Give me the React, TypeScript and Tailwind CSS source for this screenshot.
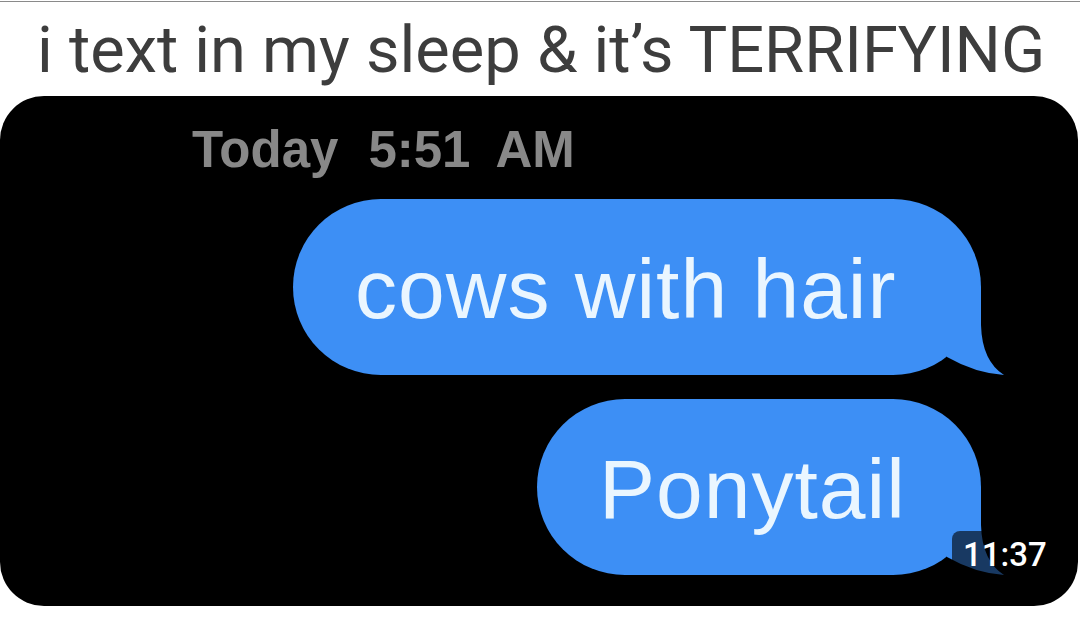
const BubbleTail = () => (
  <svg
    className="absolute right-[-24px] bottom-0 w-[110px] h-[110px]"
    viewBox="0 0 110 110"
  >
    <path
      d="M52 22 L86 22 L86 60 Q87 96 109 110 Q80 108 52 92 Z"
      fill="#3d8ff5"
    />
  </svg>
);

interface BubbleProps {
  text: string;
  width: string;
}

const Bubble = ({ text, width }: BubbleProps) => (
  <div
    className={`relative h-[176px] rounded-full bg-[#3d8ff5] pl-[62px] pt-[48px] ${width}`}
  >
    <span className="block text-[84px] leading-none tracking-[1px] text-[#eaf6ff] font-['Liberation_Sans',Arial,sans-serif]">
      {text}
    </span>
    <BubbleTail />
  </div>
);

export default function App() {
  return (
    <div className="relative w-[1080px] h-[619px] overflow-hidden bg-white flex flex-col">
      <div className="mt-px h-px w-full bg-[#8a8a8a]" />

      <h1 className="mt-[16px] pl-[37px] text-[65px] leading-none font-normal text-[#3d3d3d] font-['Roboto',Arial,sans-serif] whitespace-nowrap">
        i text in my sleep &amp; it’s TERRIFYING
      </h1>

      <div className="mt-[13px] w-[1078px] h-[510px] rounded-[44px] bg-black flex flex-col pt-[28px]">
        <div className="flex items-baseline pl-[192px] text-[51px] leading-none font-bold text-[#888888] font-['Liberation_Sans',Arial,sans-serif]">
          <span>Today</span>
          <span className="ml-[30px]">5:51</span>
          <span className="ml-[25px]">AM</span>
        </div>

        <div className="mt-[24px] flex flex-col items-end gap-[24px] pr-[97px]">
          <Bubble text="cows with hair" width="w-[688px]" />
          <Bubble text="Ponytail" width="w-[444px]" />
        </div>
      </div>

      <div className="absolute left-[952px] top-[531px] w-[104px] h-[47px] rounded-lg bg-black/60 flex items-center pl-[11px] text-[33px] font-medium leading-none text-white font-['Roboto',Arial,sans-serif]">
        11:37
      </div>
    </div>
  );
}
